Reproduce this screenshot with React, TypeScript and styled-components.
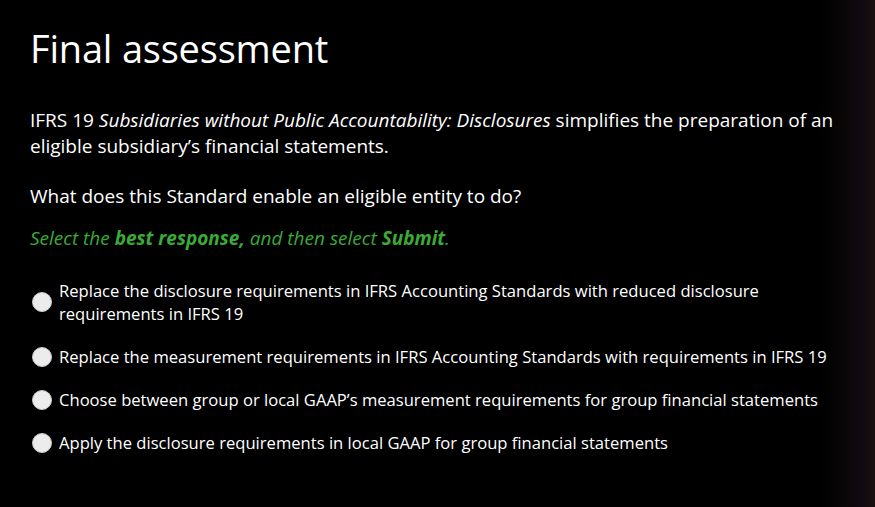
import { createGlobalStyle } from 'styled-components';
import styled from 'styled-components';

const GlobalStyle = createGlobalStyle`
  html, body {
    margin: 0;
    padding: 0;
    background: #000;
  }
  body {
    font-family: 'Open Sans', 'Liberation Sans', sans-serif;
    color: #fff;
  }
  * {
    box-sizing: border-box;
  }
`;

const options = [
  'Replace the disclosure requirements in IFRS Accounting Standards with reduced disclosure requirements in IFRS 19',
  'Replace the measurement requirements in IFRS Accounting Standards with requirements in IFRS 19',
  'Choose between group or local GAAP’s measurement requirements for group financial statements',
  'Apply the disclosure requirements in local GAAP for group financial statements'
];

export default function App() {
  return (
    <>
      <GlobalStyle />
      <Page>
        <Content>
          <Title>Final assessment</Title>
          <Intro>
            IFRS 19 <em>Subsidiaries without Public Accountability: Disclosures</em> simplifies the
            preparation of an eligible subsidiary’s financial statements.
          </Intro>
          <Question>What does this Standard enable an eligible entity to do?</Question>
          <Instruction>
            Select the <strong>best response,</strong> and then select <strong>Submit</strong>.
          </Instruction>
          <OptionList>
            {options.map((text, i) => (
              <Option key={i}>
                <HiddenRadio type="radio" name="answer" />
                <RadioCircle />
                <OptionText>{text}</OptionText>
              </Option>
            ))}
          </OptionList>
        </Content>
      </Page>
    </>
  );
}

const Page = styled.div`
  width: 875px;
  height: 507px;
  overflow: hidden;
  background:
    linear-gradient(
      90deg,
      rgba(0, 0, 0, 0) 0px,
      rgba(0, 0, 0, 0) 820px,
      #0a0707 845px,
      #120a12 862px,
      #1a0f0e 875px
    ),
    #000;
`;

const Content = styled.div`
  width: 840px;
  padding: 24px 0 0 30px;
  display: flex;
  flex-direction: column;
`;

const Title = styled.h1`
  margin: 0;
  font-size: 38px;
  font-weight: 400;
  line-height: 48px;
  letter-spacing: -0.2px;
`;

const Intro = styled.p`
  margin: 35px 0 0;
  font-size: 19px;
  line-height: 26px;

  em {
    font-style: italic;
  }
`;

const Question = styled.p`
  margin: 24px 0 0;
  font-size: 19px;
  line-height: 26px;
`;

const Instruction = styled.p`
  margin: 16px 0 0;
  font-size: 19px;
  line-height: 26px;
  font-style: italic;
  color: #3aac36;

  strong {
    font-weight: 700;
  }
`;

const OptionList = styled.div`
  display: flex;
  flex-direction: column;
  gap: 20px;
  margin-top: 28px;
`;

const Option = styled.label`
  display: flex;
  align-items: center;
  gap: 7px;
  cursor: pointer;
`;

const HiddenRadio = styled.input`
  position: absolute;
  opacity: 0;
  width: 0;
  height: 0;
`;

const RadioCircle = styled.span`
  flex: 0 0 20px;
  width: 20px;
  height: 20px;
  margin-left: 2px;
  border-radius: 50%;
  background: #ececec;
  border: 1px solid #c8c8c8;
`;

const OptionText = styled.span`
  font-size: 16.6px;
  line-height: 23px;
  max-width: 775px;
`;
